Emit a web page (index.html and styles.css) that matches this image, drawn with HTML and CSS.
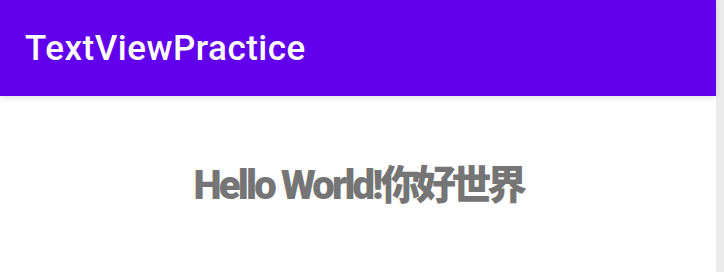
FILE: index.html
```html
<!DOCTYPE html>
<html lang="en">
<head>
    <meta charset="UTF-8">
    <meta name="viewport" content="width=device-width, initial-scale=1.0">
    <title>TextViewPractice</title>
    <link rel="stylesheet" href="styles.css">
</head>
<body>

    <div class="screen">
        <div class="app-bar">
            <h1>TextViewPractice</h1>
        </div>
        <div class="content">
            <p class="hello">Hello World!<span class="cjk">你好世界</span></p>
        </div>
    </div>
    <div class="edge"></div>

</body>
</html>
```

FILE: styles.css
```css
body {
    margin: 0;
    padding: 0;
    height: 272px;
    display: flex;
    font-family: Roboto, "Noto Sans CJK SC", sans-serif;
    background-color: #ffffff;
    overflow: hidden;
}
.screen {
    width: 716px;
    display: flex;
    flex-direction: column;
}
.app-bar {
    height: 96px;
    flex-shrink: 0;
    background-color: #6200ee;
    display: flex;
    align-items: center;
    padding-left: 25px;
    box-shadow: 0 2px 6px rgba(0, 0, 0, 0.12);
    position: relative;
    z-index: 1;
}
.app-bar h1 {
    margin: 0;
    color: #ffffff;
    font-size: 35px;
    font-weight: 500;
    letter-spacing: 0.5px;
}
.content {
    flex: 1;
    display: flex;
    align-items: center;
    justify-content: center;
}
.hello {
    margin: 0 0 4px 0;
    color: #757575;
    font-size: 40px;
    font-weight: 900;
    letter-spacing: -2.8px;
}
.cjk {
    letter-spacing: -4.5px;
}
.edge {
    flex: 1;
    background-color: #ebebeb;
}
```
